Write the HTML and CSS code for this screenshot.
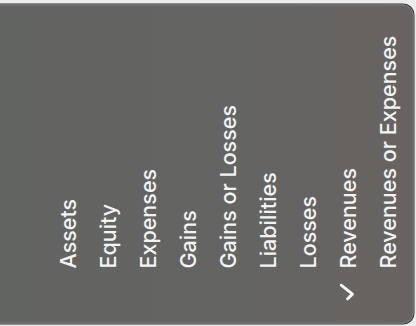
FILE: index.html
```html
<!DOCTYPE html>
<html>
<head>
<meta charset="utf-8">
<link rel="stylesheet" href="styles.css">
</head>
<body>
<div class="stage">
  <div class="menu">
    <ul class="items">
      <li class="item">Assets</li>
      <li class="item">Equity</li>
      <li class="item">Expenses</li>
      <li class="item">Gains</li>
      <li class="item">Gains or Losses</li>
      <li class="item">Liabilities</li>
      <li class="item">Losses</li>
      <li class="item checked"><svg class="check" viewBox="0 0 18 16" width="19" height="17"><path d="M2.5 8.5 L7 13.2 L15.5 2.5" fill="none" stroke="#f4f4f4" stroke-width="2.7" stroke-linecap="round" stroke-linejoin="round"/></svg>Revenues</li>
      <li class="item">Revenues or Expenses</li>
    </ul>
  </div>
</div>
</body>
</html>
```
FILE: styles.css
```css
html, body {
  margin: 0;
  padding: 0;
}
body {
  background: #ececec;
  font-family: Inter, "Liberation Sans", sans-serif;
}
.stage {
  position: relative;
  width: 416px;
  height: 326px;
  overflow: hidden;
  background: #ececec;
}
.menu {
  position: absolute;
  left: 38.5px;
  top: -51.5px;
  width: 321px;
  height: 430px;
  box-sizing: border-box;
  transform: rotate(-90deg);
  background: linear-gradient(to bottom, #626462 0%, #646462 60%, #686361 100%);
  border: 1px solid #2e2e2e;
  border-radius: 0 0 11px 11px;
  box-shadow: inset 0 0 0 1px rgba(255,255,255,0.14);
  display: flex;
  flex-direction: column;
  justify-content: flex-end;
}
.items {
  list-style: none;
  margin: 0;
  padding: 0 0 6px 0;
}
.item {
  position: relative;
  height: 40px;
  line-height: 40px;
  padding-left: 55px;
  font-size: 21.5px;
  font-weight: 450;
  color: #f3f3f3;
  white-space: nowrap;
}
.check {
  position: absolute;
  left: 22px;
  top: 11px;
}
```
